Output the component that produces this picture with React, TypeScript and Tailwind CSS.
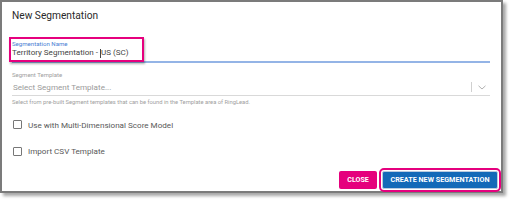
import React from "react";

export default function App() {
  return (
    <div className="w-[512px] h-[204px] bg-white overflow-hidden font-['Roboto',_sans-serif]">
      <div className="w-[503px] h-[193px] border-2 border-[#7b7b7b] bg-white shadow-[3px_3px_3px_rgba(0,0,0,0.35)] flex flex-col pl-[10px] pr-[11px]">
        <div className="pt-[8px] text-[10.2px] leading-[12px] text-[#2a2a2a]">New Segmentation</div>

        {/* Segmentation Name field */}
        <div className="relative mt-[18px] flex flex-col border-b-2 border-[#94b4e6] pb-[3px]">
          <div className="text-[6.1px] leading-[7px] text-[#4a80d4]">Segmentation Name</div>
          <div className="mt-[1px] text-[8.05px] leading-[10px] text-[#444] flex items-center">
            <span className="whitespace-pre">Territory Segmentation - </span>
            <span className="inline-block w-px h-[9px] bg-[#444]" />
            <span>US (SC)</span>
          </div>
          <div className="absolute left-[-3px] top-[-3px] w-[135px] h-[25px] border-2 border-[#e6007e] shadow-[1px_2px_2px_rgba(0,0,0,0.3)] pointer-events-none" />
        </div>

        {/* Segment Template select */}
        <div className="mt-[8px] flex flex-col">
          <div className="text-[6px] leading-[7px] text-[#a0a0a0]">Segment Template</div>
          <div className="mt-[4px] flex items-center border-b border-[#d9d9d9] pb-[3px]">
            <div className="flex-1 text-[8.1px] leading-[10px] text-[#9a9a9a] pl-[1px]">Select Segment Template...</div>
            <div className="w-px h-[10px] bg-[#d0d0d0]" />
            <svg width="8" height="5" viewBox="0 0 8 5" className="ml-[6px] mr-[4px]">
              <path d="M0.5 0.8 L4 4 L7.5 0.8" fill="none" stroke="#a8a8a8" strokeWidth="0.9" />
            </svg>
          </div>
          <div className="mt-[2.5px] text-[5.8px] leading-[7px] text-[#a0a0a0] whitespace-nowrap">
            Select from pre-built Segment templates that can be found in the Template area of RingLead.
          </div>
        </div>

        {/* Checkboxes */}
        <div className="mt-[13px] flex items-center h-[12px]">
          <div className="ml-[1px] w-[9px] h-[9px] border border-[#777] rounded-[1px]" />
          <span className="ml-[6px] text-[8.1px] leading-[10px] text-[#585858]">Use with Multi-Dimensional Score Model</span>
        </div>
        <div className="mt-[14.5px] flex items-center h-[12px]">
          <div className="ml-[1px] w-[9px] h-[9px] border border-[#777] rounded-[1px]" />
          <span className="ml-[6px] text-[8.1px] leading-[10px] text-[#585858]">Import CSV Template</span>
        </div>

        {/* Buttons */}
        <div className="mt-[14px] mr-[-8px] flex justify-end items-center gap-[5px]">
          <button className="h-[18px] w-[38px] rounded-[2px] bg-[#e5007d] text-white text-[7.1px] font-bold leading-none flex items-center justify-center">
            CLOSE
          </button>
          <button className="h-[18px] w-[116px] rounded-[2px] bg-[#1369b8] border border-[#b9cbe0] text-white text-[7.2px] font-bold leading-none flex items-center justify-center outline-2 outline-[#e5007e] outline-offset-[1px]">
            CREATE NEW SEGMENTATION
          </button>
        </div>
      </div>
    </div>
  );
}
